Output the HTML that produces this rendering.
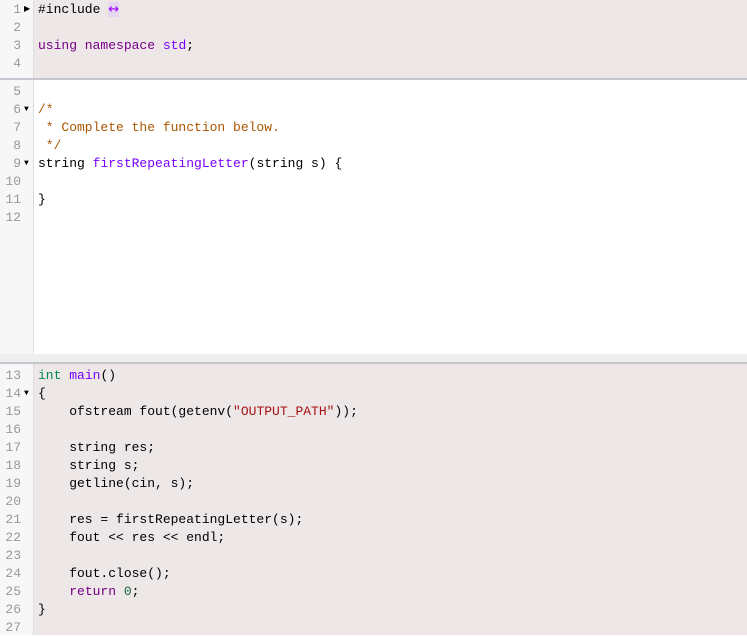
<!DOCTYPE html><html><head><style>
body{margin:0;width:747px;height:635px;overflow:hidden;background:#fff;font-family:"Liberation Mono",monospace;font-size:13px;position:relative}
.g{position:absolute;left:0;top:0;width:33px;height:635px;background:#f7f7f7;border-right:1px solid #ddd}
.ro{position:absolute;left:34px;right:0;background:#ede7e7}
.hr{position:absolute;left:0;right:0;height:2px;background:#c6c6cf}
.l{position:absolute;left:0;height:18px;line-height:18px;white-space:pre;width:747px}
.n{position:absolute;left:0;width:21px;text-align:right;color:#999}
.a{position:absolute;left:24px;font-size:8px;color:#000}
.c{position:absolute;left:38px;color:#000}
.k{color:#708}.t{color:#085}.f{color:#70f}.m{color:#a50}.s{color:#a11}.d{color:#164}
</style></head><body>
<div class="g"></div>
<div class="ro" style="top:0;height:78px"></div>
<div class="hr" style="top:78px"></div>
<div style="position:absolute;left:0;right:0;top:354px;height:8px;background:#efefef"></div>
<div class="hr" style="top:362px"></div>
<div class="ro" style="top:364px;height:271px"></div>
<div class="l" style="top:1px"><span class="n">1</span><span class="a">▶</span><span class="c">#include <span style="color:#90f;background:#e6d6f0;font-family:'DejaVu Sans',sans-serif">↔</span></span></div>
<div class="l" style="top:19px"><span class="n">2</span></div>
<div class="l" style="top:37px"><span class="n">3</span><span class="c"><span class="k">using namespace</span> <span class="f">std</span>;</span></div>
<div class="l" style="top:55px"><span class="n">4</span></div>
<div class="l" style="top:83px"><span class="n">5</span></div>
<div class="l" style="top:101px"><span class="n">6</span><span class="a">▼</span><span class="c m">/*</span></div>
<div class="l" style="top:119px"><span class="n">7</span><span class="c m"> * Complete the function below.</span></div>
<div class="l" style="top:137px"><span class="n">8</span><span class="c m"> */</span></div>
<div class="l" style="top:155px"><span class="n">9</span><span class="a">▼</span><span class="c">string <span class="f">firstRepeatingLetter</span>(string s) {</span></div>
<div class="l" style="top:173px"><span class="n">10</span></div>
<div class="l" style="top:191px"><span class="n">11</span><span class="c">}</span></div>
<div class="l" style="top:209px"><span class="n">12</span></div>
<div class="l" style="top:367px"><span class="n">13</span><span class="c"><span class="t">int</span> <span class="f">main</span>()</span></div>
<div class="l" style="top:385px"><span class="n">14</span><span class="a">▼</span><span class="c">{</span></div>
<div class="l" style="top:403px"><span class="n">15</span><span class="c">    ofstream fout(getenv(<span class="s">"OUTPUT_PATH"</span>));</span></div>
<div class="l" style="top:421px"><span class="n">16</span></div>
<div class="l" style="top:439px"><span class="n">17</span><span class="c">    string res;</span></div>
<div class="l" style="top:457px"><span class="n">18</span><span class="c">    string s;</span></div>
<div class="l" style="top:475px"><span class="n">19</span><span class="c">    getline(cin, s);</span></div>
<div class="l" style="top:493px"><span class="n">20</span></div>
<div class="l" style="top:511px"><span class="n">21</span><span class="c">    res = firstRepeatingLetter(s);</span></div>
<div class="l" style="top:529px"><span class="n">22</span><span class="c">    fout &lt;&lt; res &lt;&lt; endl;</span></div>
<div class="l" style="top:547px"><span class="n">23</span></div>
<div class="l" style="top:565px"><span class="n">24</span><span class="c">    fout.close();</span></div>
<div class="l" style="top:583px"><span class="n">25</span><span class="c">    <span class="k">return</span> <span class="d">0</span>;</span></div>
<div class="l" style="top:601px"><span class="n">26</span><span class="c">}</span></div>
<div class="l" style="top:619px"><span class="n">27</span></div>
</body></html>
